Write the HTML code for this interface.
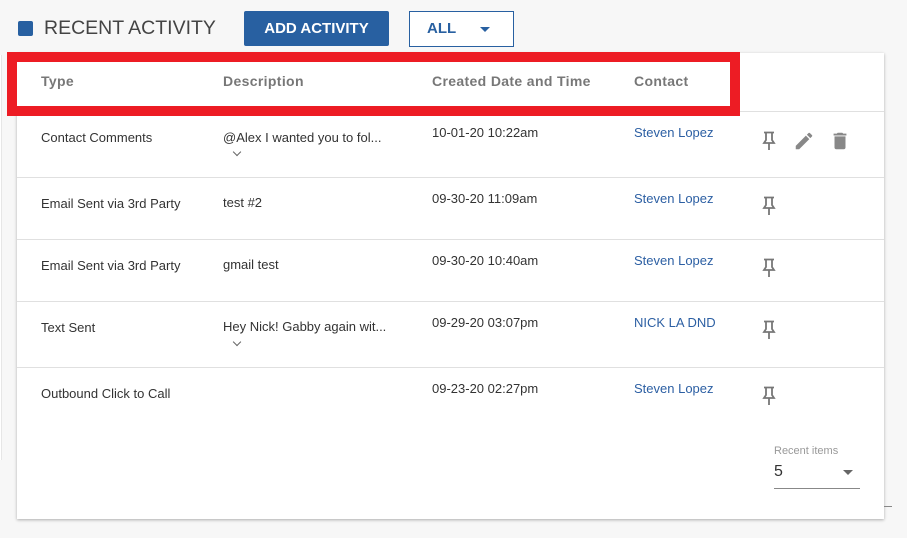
<!DOCTYPE html>
<html><head><style>
*{margin:0;padding:0;box-sizing:border-box}
body{width:907px;height:538px;background:#f7f7f7;font-family:"Liberation Sans",sans-serif;position:relative;overflow:hidden;color:#333}
.a{position:absolute;white-space:nowrap}
.t{font-size:13px;color:#333}
.h{font-size:14px;font-weight:bold;color:#777;letter-spacing:.35px}
.lk{font-size:13px;color:#2c5fa3}
.line{position:absolute;left:17px;width:867px;height:1px;background:#e0e0e0}
.chev{position:absolute;width:6px;height:6px;border-right:1.3px solid #666;border-bottom:1.3px solid #666;transform:rotate(45deg)}
</style></head><body>
<div class="a" style="left:0;top:55px;width:2px;height:405px;background:#fff;border-right:1px solid #e6e6e6"></div>
<div class="a" style="left:18px;top:21px;width:15px;height:15px;background:#2860a1;border-radius:2px"></div>
<div class="a" style="left:44px;top:17px;font-size:19.5px;color:#444;letter-spacing:0">RECENT ACTIVITY</div>
<div class="a" style="left:244px;top:11px;width:145px;height:35px;background:#2860a1;border-radius:2px;color:#fff;font-weight:bold;font-size:15px;text-align:center;line-height:35px">ADD ACTIVITY</div>
<div class="a" style="left:409px;top:11px;width:105px;height:36px;border:1px solid #2860a1;background:#fff;color:#2860a1;font-weight:bold;font-size:15px;line-height:34px;padding-left:17px">ALL</div>
<div class="a" style="left:480px;top:27px;border-left:5px solid transparent;border-right:5px solid transparent;border-top:5px solid #2860a1"></div>
<div class="a" style="left:17px;top:53px;width:867px;height:466px;background:#fff;box-shadow:0 1px 3px rgba(0,0,0,.3)"></div>
<div class="line" style="top:111px"></div>
<div class="line" style="top:177px"></div>
<div class="line" style="top:239px"></div>
<div class="line" style="top:301px"></div>
<div class="line" style="top:367px"></div>
<div class="a h" style="left:41px;top:73px">Type</div>
<div class="a h" style="left:223px;top:73px">Description</div>
<div class="a h" style="left:432px;top:73px">Created Date and Time</div>
<div class="a h" style="left:634px;top:73px">Contact</div>
<div class="a" style="left:7px;top:52px;width:733px;height:64px;border:10px solid #ed1c24"></div>

<div class="a t" style="left:41px;top:130px">Contact Comments</div>
<div class="a t" style="left:223px;top:130px">@Alex I wanted you to fol...</div>
<div class="chev" style="left:234px;top:149px"></div>
<div class="a t" style="left:432px;top:125px">10-01-20 10:22am</div>
<div class="a lk" style="left:634px;top:125px">Steven Lopez</div>

<div class="a t" style="left:41px;top:196px">Email Sent via 3rd Party</div>
<div class="a t" style="left:223px;top:195px">test #2</div>
<div class="a t" style="left:432px;top:191px">09-30-20 11:09am</div>
<div class="a lk" style="left:634px;top:191px">Steven Lopez</div>

<div class="a t" style="left:41px;top:258px">Email Sent via 3rd Party</div>
<div class="a t" style="left:223px;top:257px">gmail test</div>
<div class="a t" style="left:432px;top:253px">09-30-20 10:40am</div>
<div class="a lk" style="left:634px;top:253px">Steven Lopez</div>

<div class="a t" style="left:41px;top:320px">Text Sent</div>
<div class="a t" style="left:223px;top:319px">Hey Nick! Gabby again wit...</div>
<div class="chev" style="left:234px;top:339px"></div>
<div class="a t" style="left:432px;top:315px">09-29-20 03:07pm</div>
<div class="a lk" style="left:634px;top:315px">NICK LA DND</div>

<div class="a t" style="left:41px;top:386px">Outbound Click to Call</div>
<div class="a t" style="left:432px;top:381px">09-23-20 02:27pm</div>
<div class="a lk" style="left:634px;top:381px">Steven Lopez</div>

<svg width="0" height="0" style="position:absolute"><defs>
<g id="pin"><path d="M2 1.5h10M4 1.5v7.5L2 12h10l-2-3V1.5M7 12v7" fill="none" stroke="#777" stroke-width="1.8"/></g>
</defs></svg>
<svg class="a" style="left:762px;top:131px" width="14" height="20"><use href="#pin"/></svg>
<svg class="a" style="left:762px;top:196px" width="14" height="20"><use href="#pin"/></svg>
<svg class="a" style="left:762px;top:258px" width="14" height="20"><use href="#pin"/></svg>
<svg class="a" style="left:762px;top:320px" width="14" height="20"><use href="#pin"/></svg>
<svg class="a" style="left:762px;top:386px" width="14" height="20"><use href="#pin"/></svg>
<svg class="a" style="left:793px;top:130px" width="22" height="22" viewBox="0 0 24 24"><path fill="#888" d="M3 17.25V21h3.75L17.81 9.94l-3.75-3.75L3 17.25zM20.71 7.04a1 1 0 000-1.41l-2.34-2.34a1 1 0 00-1.41 0l-1.83 1.83 3.75 3.75 1.83-1.83z"/></svg>
<svg class="a" style="left:829px;top:130px" width="22" height="22" viewBox="0 0 24 24"><path fill="#888" d="M6 19a2 2 0 002 2h8a2 2 0 002-2V7H6v12zM19 4h-3.5l-1-1h-5l-1 1H5v2h14V4z"/></svg>

<div class="a" style="left:774px;top:445px;font-size:11px;color:#999">Recent items</div>
<div class="a" style="left:774px;top:463px;font-size:16px;color:#333">5</div>
<div class="a" style="left:843px;top:470px;border-left:5px solid transparent;border-right:5px solid transparent;border-top:5px solid #666"></div>
<div class="a" style="left:774px;top:488px;width:86px;height:1px;background:#888"></div>
<div class="a" style="left:884px;top:506px;width:8px;height:1px;background:#888"></div>
</body></html>
